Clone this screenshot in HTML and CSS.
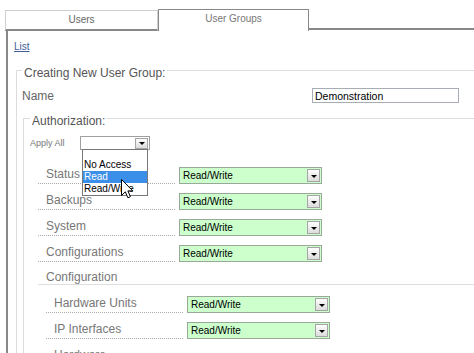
FILE: index.html
```html
<!DOCTYPE html>
<html>
<head>
<meta charset="utf-8">
<link rel="stylesheet" href="styles.css">
</head>
<body>
<div class="tabbar">
  <div class="tab">Users</div>
  <div class="tab active">User Groups</div>
  <div class="tab-fill"></div>
</div>
<div class="panel">
  <a class="list-link" href="#">List</a>
  <fieldset class="group outer">
    <legend>Creating New User Group:</legend>
    <div class="name-row">
      <span class="name-label">Name</span>
      <input class="text-input" type="text" value="Demonstration">
    </div>
    <fieldset class="group auth">
      <legend>Authorization:</legend>
      <div class="apply-row">
        <span class="apply-label">Apply All</span>
        <div class="apply-wrap">
          <div class="sel sel-white"><span class="sel-text"></span><span class="sel-btn"></span></div>
          <ul class="popup">
            <li class="opt blank"></li>
            <li class="opt">No Access</li>
            <li class="opt hl">Read</li>
            <li class="opt">Read/Write</li>
          </ul>
          <svg class="cursor" width="13" height="20" viewBox="0 0 13 20"><path d="M0.5 0.5 L0.5 16.5 L4.3 12.8 L6.9 18.8 L9.4 17.7 L6.9 11.9 L11.8 11.9 Z" fill="#fff" stroke="#000" stroke-width="1" stroke-linejoin="round"/></svg>
        </div>
      </div>
      <div class="perm-list">
        <div class="row"><span class="row-label">Status</span><div class="sel"><span class="sel-text">Read/Write</span><span class="sel-btn"></span></div></div>
        <div class="row"><span class="row-label">Backups</span><div class="sel"><span class="sel-text">Read/Write</span><span class="sel-btn"></span></div></div>
        <div class="row"><span class="row-label">System</span><div class="sel"><span class="sel-text">Read/Write</span><span class="sel-btn"></span></div></div>
        <div class="row"><span class="row-label">Configurations</span><div class="sel"><span class="sel-text">Read/Write</span><span class="sel-btn"></span></div></div>
        <div class="section-head">Configuration</div>
        <div class="row sub"><span class="row-label">Hardware Units</span><div class="sel"><span class="sel-text">Read/Write</span><span class="sel-btn"></span></div></div>
        <div class="row sub"><span class="row-label">IP Interfaces</span><div class="sel"><span class="sel-text">Read/Write</span><span class="sel-btn"></span></div></div>
        <div class="row sub"><span class="row-label nodots">Hardware</span></div>
      </div>
    </fieldset>
  </fieldset>
</div>
</body>
</html>
```
FILE: styles.css
```css
html, body {
  margin: 0;
  padding: 0;
  background: #fff;
  overflow: hidden;
}
body {
  font-family: "Liberation Sans", Arial, sans-serif;
  width: 474px;
  height: 353px;
}
.tabbar {
  display: flex;
  height: 31px;
  box-sizing: border-box;
  padding: 9px 0 0 5px;
}
.tab {
  width: 153px;
  box-sizing: border-box;
  margin-top: 1px;
  border: 1px solid #cfcfcf;
  border-bottom: 2px solid #888;
  text-align: center;
  font-size: 10px;
  line-height: 18px;
  color: #666;
}
.tab.active {
  width: 151px;
  margin-top: 0;
  border: 1px solid #888;
  border-bottom: none;
  line-height: 18px;
  color: #777;
}
.tab-fill {
  flex: 1;
  border-bottom: 2px solid #888;
  margin-bottom: 1px;
}
.panel {
  margin-left: 6px;
  border-left: 2px solid #888;
  padding: 9px 0 0 6px;
  height: 322px;
  box-sizing: border-box;
  overflow: hidden;
}
.list-link {
  display: block;
  width: max-content;
  font-size: 10px;
  line-height: 13px;
  color: #3d5c99;
  text-decoration: underline;
}
.group {
  border: 1px solid #dcdcdc;
  border-right: none;
  border-bottom: none;
  min-width: 0;
  margin: 0;
}
.group > legend {
  padding: 5px 2px 0;
  font-size: 12px;
  line-height: 14px;
  color: #555;
}
.outer {
  margin: 8px 0 0 2px;
  padding: 0 0 0 5px;
  height: 400px;
}
.name-row {
  display: flex;
  align-items: center;
  height: 15px;
  margin-top: 8px;
}
.name-label {
  width: 290px;
  font-size: 12px;
  color: #666;
}
.text-input {
  width: 147px;
  height: 15px;
  box-sizing: border-box;
  margin: 0;
  border: 1px solid #a8adb5;
  padding: 0 2px;
  font-family: "Liberation Sans", Arial, sans-serif;
  font-size: 10.5px;
  color: #000;
  outline: none;
}
.auth {
  margin: 6px 0 0 1px;
  padding: 0 0 0 6px;
  height: 300px;
}
.apply-row {
  display: flex;
  align-items: center;
  height: 14px;
  margin-top: 8px;
}
.apply-label {
  width: 50px;
  font-size: 9px;
  color: #777;
}
.apply-wrap {
  position: relative;
  width: 70px;
  height: 14px;
}
.sel {
  display: flex;
  align-items: center;
  width: 143px;
  height: 17px;
  box-sizing: border-box;
  margin-left: 4px;
  border: 1px solid #9aa89a;
  background: #ccffcc;
}
.sel-white {
  width: 70px;
  height: 14px;
  margin-left: 0;
  background: #fff;
  border-color: #a0a0a0;
}
.sel-text {
  flex: 1;
  padding-left: 3px;
  font-size: 10px;
  color: #000;
  white-space: nowrap;
}
.sel-btn {
  position: relative;
  width: 13px;
  height: 13px;
  box-sizing: border-box;
  margin-right: 1px;
  border: 1px solid #a5a5a5;
  background: linear-gradient(#fdfdfd, #dcdcdc);
}
.sel-white .sel-btn {
  height: 11px;
}
.sel-btn::after {
  content: "";
  position: absolute;
  left: 50%;
  top: 50%;
  margin: -1px 0 0 -3px;
  border-left: 3px solid transparent;
  border-right: 3px solid transparent;
  border-top: 3px solid #000;
}
.popup {
  position: absolute;
  left: 2px;
  top: 13px;
  width: 66px;
  box-sizing: border-box;
  margin: 0;
  padding: 0;
  list-style: none;
  background: #fff;
  border: 1px solid #777;
  z-index: 2;
}
.opt {
  height: 12px;
  line-height: 12px;
  font-size: 10px;
  color: #000;
  padding-left: 1px;
}
.opt.blank {
  height: 9px;
}
.opt.hl {
  background: #3b8fe8;
  color: #fff;
}
.cursor {
  position: absolute;
  left: 41px;
  top: 43px;
  z-index: 3;
}
.perm-list {
  margin-top: 16px;
}
.row {
  display: flex;
  align-items: flex-end;
  height: 18px;
  margin: 0 0 8px 8px;
}
.row.sub {
  margin-left: 16px;
}
.row-label {
  width: 137px;
  height: 18px;
  box-sizing: border-box;
  padding-left: 8px;
  border-bottom: 1px dotted #a9a9a9;
  font-size: 12px;
  line-height: 17px;
  color: #777;
}
.row-label.nodots {
  border-bottom: none;
}
.section-head {
  margin: 0 0 10px 8px;
  padding-left: 8px;
  height: 14px;
  line-height: 14px;
  font-size: 12px;
  color: #777;
  border-bottom: 1px solid #dedede;
}
```
